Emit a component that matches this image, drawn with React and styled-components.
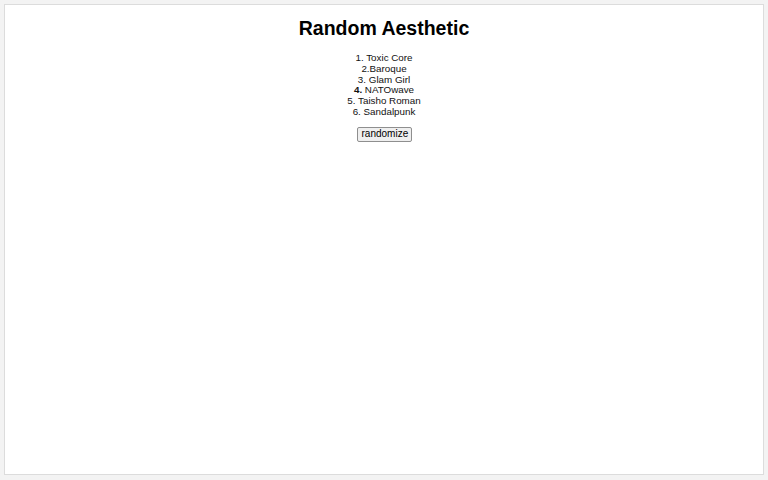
import styled, { createGlobalStyle } from 'styled-components';

const GlobalStyle = createGlobalStyle`
  html, body {
    margin: 0;
    background: #f3f3f3;
  }
  body {
    padding: 4px 4px 5px 4px;
    font-family: 'Liberation Sans', Arial, sans-serif;
    color: #000;
  }
`;

const aesthetics = [
  { num: '1. ', name: 'Toxic Core' },
  { num: '2.', name: 'Baroque' },
  { num: '3. ', name: 'Glam Girl' },
  { num: '4. ', name: 'NATOwave', bold: true },
  { num: '5. ', name: 'Taisho Roman' },
  { num: '6. ', name: 'Sandalpunk' },
];

const Panel = styled.main`
  box-sizing: border-box;
  height: 471px;
  background: #fff;
  border: 1px solid #dcdcdc;
  display: flex;
  flex-direction: column;
  align-items: center;
  padding-top: 11px;
`;

const Title = styled.h1`
  margin: 0;
  font-size: 19.5px;
  font-weight: bold;
  line-height: 24px;
`;

const List = styled.div`
  margin-top: 13px;
  display: flex;
  flex-direction: column;
  align-items: center;
  font-size: 9.8px;
  line-height: 10.8px;
  color: #111;
`;

const Item = styled.div`
  white-space: pre;
`;

const Num = styled.span`
  font-weight: ${(p) => (p.$bold ? 'bold' : 'normal')};
`;

const Button = styled.button`
  margin-top: 9px;
  font-family: 'Liberation Sans', Arial, sans-serif;
  font-size: 10px;
  line-height: 12px;
  padding: 0 4px;
  height: 15px;
  width: 55px;
  background: #efefef;
  border: 1px solid #8f8f8f;
  border-radius: 2px;
  color: #000;
`;

export default function App() {
  return (
    <>
      <GlobalStyle />
      <Panel>
        <Title>Random Aesthetic</Title>
        <List>
          {aesthetics.map((a) => (
            <Item key={a.name}>
              <Num $bold={a.bold}>{a.num}</Num>
              {a.name}
            </Item>
          ))}
        </List>
        <Button>randomize</Button>
      </Panel>
    </>
  );
}
